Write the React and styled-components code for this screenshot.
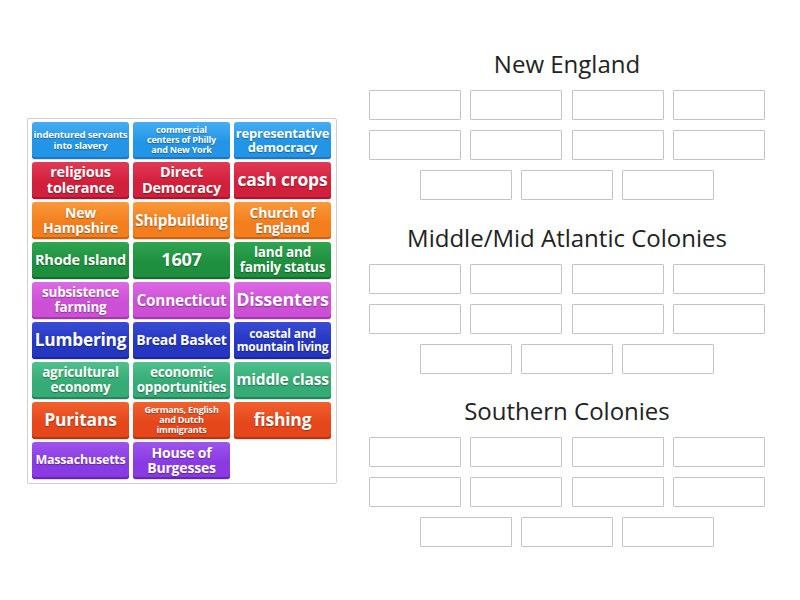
import React from "react";
import styled, { createGlobalStyle } from "styled-components";

const Global = createGlobalStyle`
  html, body {
    margin: 0;
    padding: 0;
    background: #fff;
  }
  body {
    font-family: "Open Sans", "Liberation Sans", sans-serif;
  }
`;

const Page = styled.div`
  width: 800px;
  height: 600px;
  display: flex;
  align-items: center;
  padding-left: 27px;
  box-sizing: border-box;
`;

const Bank = styled.div`
  width: 310px;
  box-sizing: border-box;
  border: 1px solid #cfcfcf;
  border-radius: 2px;
  padding: 3px 5px 4px 4px;
  display: grid;
  grid-template-columns: repeat(3, 97px);
  grid-auto-rows: 37px;
  column-gap: 4px;
  row-gap: 3px;
  margin-top: 1px;
`;

const Tile = styled.div`
  display: flex;
  align-items: center;
  justify-content: center;
  text-align: center;
  border-radius: 3px;
  color: #fff;
  font-weight: 700;
  font-size: ${(p) => p.$size}px;
  line-height: ${(p) => p.$lh || 1.1};
  letter-spacing: -0.2px;
  background: linear-gradient(${(p) => p.$light}, ${(p) => p.$base} 55%, ${(p) => p.$base});
  box-shadow: inset 0 -2px 0 ${(p) => p.$dark}, 0 1px 1px rgba(0, 0, 0, 0.15);
  text-shadow: 0 1px 1px rgba(0, 0, 0, 0.35);
  overflow: hidden;
  white-space: pre;
`;

const Board = styled.div`
  align-self: flex-start;
  margin: 47px 0 0 32px;
  width: 396px;
  display: flex;
  flex-direction: column;
`;

const Group = styled.div`
  display: flex;
  flex-direction: column;
  align-items: center;
  & + & {
    margin-top: 20.5px;
  }
`;

const Title = styled.div`
  height: 34px;
  line-height: 34px;
  font-size: 24px;
  color: #222;
  font-weight: 400;
  margin-bottom: 9px;
`;

const SlotRow = styled.div`
  display: flex;
  justify-content: center;
  gap: 9.3px;
  & + & {
    margin-top: 10px;
  }
`;

const Slot = styled.div`
  width: 92px;
  height: 30px;
  box-sizing: border-box;
  border: 1px solid #c4c4c4;
  border-radius: 1px;
`;

const palette = {
  blue: ["#45aef2", "#2395e6", "#1a78c4"],
  red: ["#e23a55", "#d21f3c", "#a8152c"],
  orange: ["#f99a3a", "#f47e1e", "#c86310"],
  green: ["#2fa651", "#1e8f3e", "#146c2c"],
  pink: ["#dd6ae4", "#cd4fd6", "#a23aab"],
  navy: ["#3a4bd4", "#2536c1", "#1a2794"],
  teal: ["#4fc18c", "#35ab76", "#24845a"],
  flame: ["#f2612e", "#e5471b", "#b63410"],
  purple: ["#9d55ec", "#8a3ae2", "#6a24b8"],
};

const tiles = [
  ["blue", "indentured servants\ninto slavery", 9.6, 1.15],
  ["blue", "commercial\ncenters of Philly\nand New York", 9, 1.1],
  ["blue", "representative\ndemocracy", 13],
  ["red", "religious\ntolerance", 14.5],
  ["red", "Direct\nDemocracy", 14.5],
  ["red", "cash crops", 17.5],
  ["orange", "New\nHampshire", 14],
  ["orange", "Shipbuilding", 15.3],
  ["orange", "Church of\nEngland", 14],
  ["green", "Rhode Island", 14.5],
  ["green", "1607", 18],
  ["green", "land and\nfamily status", 13.5],
  ["pink", "subsistence\nfarming", 13.5],
  ["pink", "Connecticut", 15.3],
  ["pink", "Dissenters", 18],
  ["navy", "Lumbering", 17.3],
  ["navy", "Bread Basket", 14],
  ["navy", "coastal and\nmountain living", 12],
  ["teal", "agricultural\neconomy", 13.5],
  ["teal", "economic\nopportunities", 13.5],
  ["teal", "middle class", 15.5],
  ["flame", "Puritans", 17.5],
  ["flame", "Germans, English\nand Dutch\nimmigrants", 9, 1.1],
  ["flame", "fishing", 17.5],
  ["purple", "Massachusetts", 12.5],
  ["purple", "House of\nBurgesses", 14],
];

const groups = ["New England", "Middle/Mid Atlantic Colonies", "Southern Colonies"];

function SlotGroup({ title }) {
  return (
    <Group>
      <Title>{title}</Title>
      <SlotRow>
        <Slot /><Slot /><Slot /><Slot />
      </SlotRow>
      <SlotRow>
        <Slot /><Slot /><Slot /><Slot />
      </SlotRow>
      <SlotRow>
        <Slot /><Slot /><Slot />
      </SlotRow>
    </Group>
  );
}

export default function App() {
  return (
    <>
      <Global />
      <Page>
        <Bank>
          {tiles.map(([c, text, size, lh], i) => {
            const [light, base, dark] = palette[c];
            return (
              <Tile key={i} $light={light} $base={base} $dark={dark} $size={size} $lh={lh}>
                {text}
              </Tile>
            );
          })}
        </Bank>
        <Board>
          {groups.map((g) => (
            <SlotGroup key={g} title={g} />
          ))}
        </Board>
      </Page>
    </>
  );
}
